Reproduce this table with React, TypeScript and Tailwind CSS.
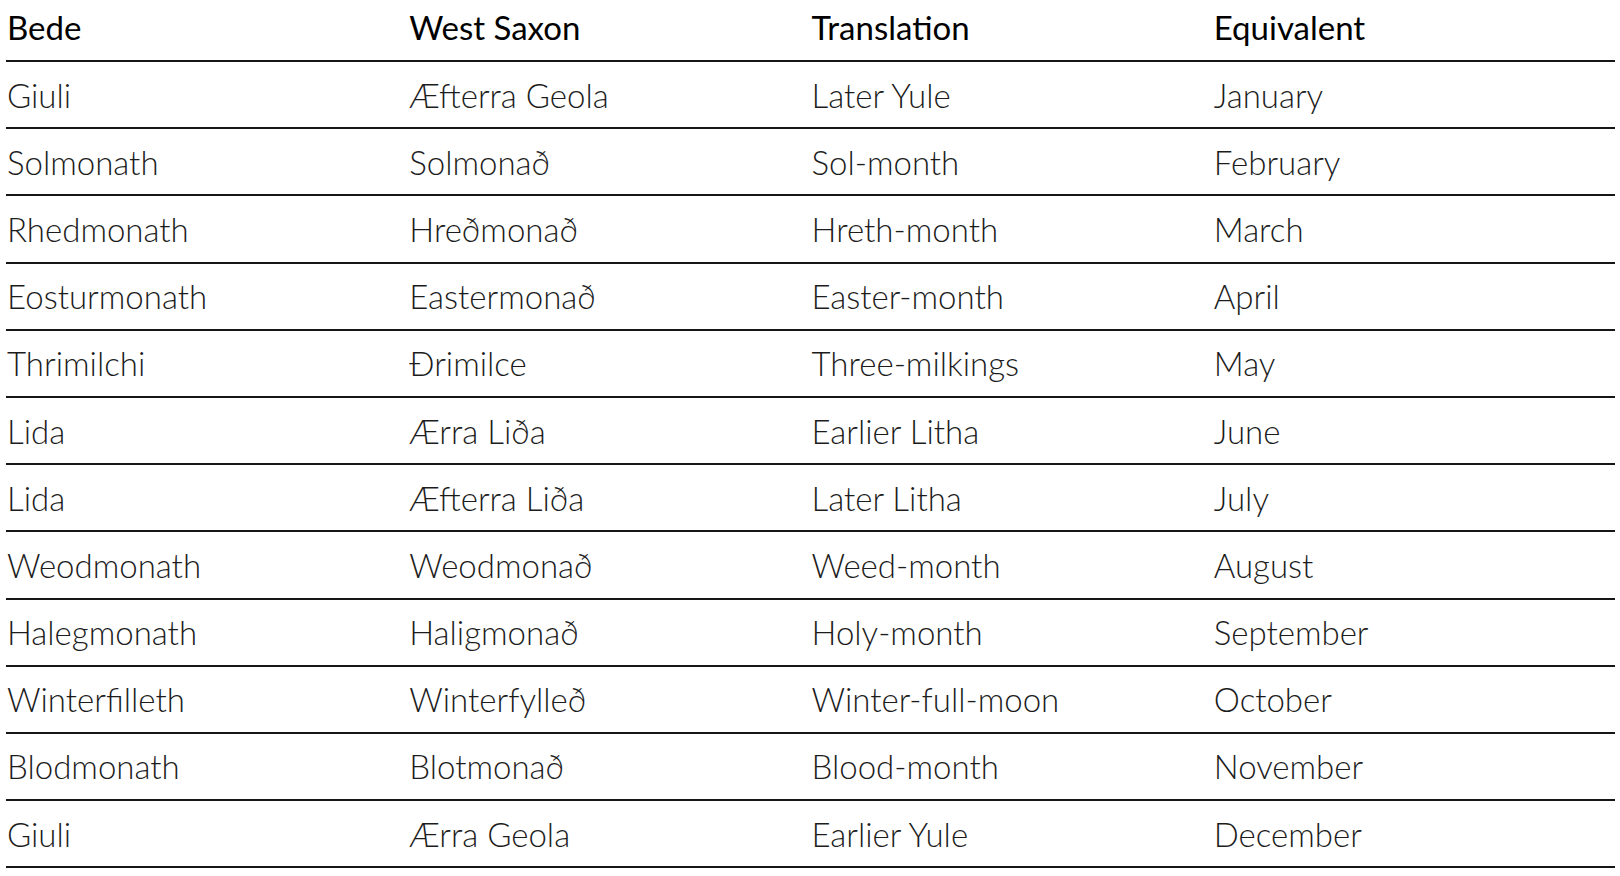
const rows: [string, string, string, string][] = [
  ['Giuli', 'Æfterra Geola', 'Later Yule', 'January'],
  ['Solmonath', 'Solmonað', 'Sol-month', 'February'],
  ['Rhedmonath', 'Hreðmonað', 'Hreth-month', 'March'],
  ['Eosturmonath', 'Eastermonað', 'Easter-month', 'April'],
  ['Thrimilchi', 'Đrimilce', 'Three-milkings', 'May'],
  ['Lida', 'Ærra Liða', 'Earlier Litha', 'June'],
  ['Lida', 'Æfterra Liða', 'Later Litha', 'July'],
  ['Weodmonath', 'Weodmonað', 'Weed-month', 'August'],
  ['Halegmonath', 'Haligmonað', 'Holy-month', 'September'],
  ['Winterfilleth', 'Winterfylleð', 'Winter-full-moon', 'October'],
  ['Blodmonath', 'Blotmonað', 'Blood-month', 'November'],
  ['Giuli', 'Ærra Geola', 'Earlier Yule', 'December'],
];

const headers = ['Bede', 'West Saxon', 'Translation', 'Equivalent'];

export default function App() {
  return (
    <div className="w-[1620px] h-[876px] bg-white overflow-hidden pl-[6px] pr-[5px] font-['Lato','Open_Sans',sans-serif]">
      <div className="grid grid-cols-4 h-[62px] items-start pt-[7px] border-b-2 border-[#161616]">
        {headers.map((h) => (
          <div key={h} className="pl-[1px] text-[33px] leading-[40px] font-normal text-black">
            {h}
          </div>
        ))}
      </div>
      {rows.map((r, i) => (
        <div key={i} className="grid grid-cols-4 h-[67.2px] items-center border-b-2 border-[#161616]">
          {r.map((c, j) => (
            <div key={j} className="pl-[1px] text-[33px] leading-[40px] font-light text-[#1c1c1c]">
              {c}
            </div>
          ))}
        </div>
      ))}
    </div>
  );
}
